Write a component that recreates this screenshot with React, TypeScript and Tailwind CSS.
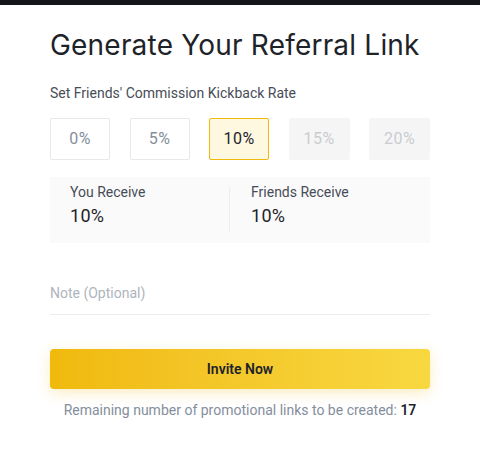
const rates = [
  { label: "0%", state: "idle" },
  { label: "5%", state: "idle" },
  { label: "10%", state: "active" },
  { label: "15%", state: "disabled" },
  { label: "20%", state: "disabled" },
] as const;

export default function App() {
  return (
    <div className="min-h-[473px] bg-white font-['Roboto','Liberation_Sans',sans-serif] text-[#1e2329]">
      <div className="h-[5px] bg-[#14151a]" />
      <div className="mx-[50px] pt-[22px]">
        <h1 className="font-['Inter','Roboto',sans-serif] text-[28px] leading-[36px] font-normal tracking-[0.2px]">
          Generate Your Referral Link
        </h1>

        <p className="mt-[20px] text-[14px] leading-[20px] text-[#474d57]">Set Friends' Commission Kickback Rate</p>

        <div className="mt-[15px] flex justify-between">
          {rates.map((r) => (
            <div
              key={r.label}
              className={
                r.state === "active"
                  ? "flex h-[42px] w-[60px] items-center justify-center rounded-[2px] border border-[#f0b90b] bg-[#fef8e1] text-[16px] tracking-[0.5px] text-[#1e2329]"
                  : r.state === "disabled"
                    ? "flex h-[42px] w-[61px] items-center justify-center rounded-[2px] bg-[#f5f5f5] text-[16px] tracking-[0.5px] text-[#c9ccd1]"
                    : "flex h-[42px] w-[60px] items-center justify-center rounded-[2px] border border-[#e6e8ea] text-[16px] tracking-[0.5px] text-[#848e9c]"
              }
            >
              {r.label}
            </div>
          ))}
        </div>

        <div className="mt-[17px] flex h-[66px] items-stretch bg-[#fafafa] py-[10px]">
          <div className="w-[180px] border-r border-[#eeeeee] pl-[20px]">
            <div className="-mt-[4px] text-[14px] leading-[18px] text-[#474d57]">You Receive</div>
            <div className="mt-[4px] text-[18px] leading-[22px] tracking-[0.3px]">10%</div>
          </div>
          <div className="pl-[21px]">
            <div className="-mt-[4px] text-[14px] leading-[18px] text-[#474d57]">Friends Receive</div>
            <div className="mt-[4px] text-[18px] leading-[22px] tracking-[0.3px]">10%</div>
          </div>
        </div>

        <div className="mt-[40px] border-b border-[#eaecef] pb-[11px] text-[14px] leading-[20px] text-[#aeb4bc]">
          Note (Optional)
        </div>

        <button className="mt-[34px] flex h-[40px] w-full items-center justify-center rounded-[4px] bg-gradient-to-r from-[#f0b90b] to-[#f8d83f] text-[14px] font-semibold text-[#1e2329] shadow-[0_4px_14px_rgba(240,185,11,0.25)]">
          Invite Now
        </button>

        <p className="mt-[11px] text-center text-[14px] leading-[20px] text-[#848e9c]">
          Remaining number of promotional links to be created: <span className="font-semibold text-[#1e2329]">17</span>
        </p>
      </div>
    </div>
  );
}
